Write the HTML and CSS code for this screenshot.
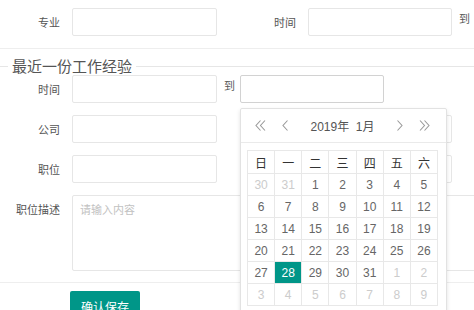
FILE: index.html
```html
<!DOCTYPE html>
<html lang="zh-CN">
<head>
<meta charset="utf-8">
<title>工作经验</title>
<link rel="stylesheet" href="styles.css">
</head>
<body>
<div class="page">
  <div class="row">
    <div class="field">
      <label class="label">专业</label>
      <div class="input"></div>
    </div>
    <div class="field field-2">
      <label class="label">时间</label>
      <div class="input input-sm"></div>
      <span class="to to-gap">到</span>
    </div>
  </div>
  <div class="sep sep-top"></div>

  <section class="group">
    <h2 class="legend"><span class="legend-text">最近一份工作经验</span></h2>
    <div class="row">
      <div class="field">
        <label class="label">时间</label>
        <div class="input"></div>
        <span class="to">到</span>
        <div class="input input-sm input-active"></div>
      </div>
    </div>
    <div class="row">
      <div class="field">
        <label class="label">公司</label>
        <div class="input"></div>
      </div>
      <div class="field field-2">
        <label class="label"></label>
        <div class="input input-sm"></div>
      </div>
    </div>
    <div class="row">
      <div class="field">
        <label class="label">职位</label>
        <div class="input"></div>
      </div>
      <div class="field field-2">
        <label class="label"></label>
        <div class="input input-sm"></div>
      </div>
    </div>
    <div class="row row-tall">
      <div class="field">
        <label class="label">职位描述</label>
        <div class="textarea"><span class="placeholder">请输入内容</span></div>
      </div>
    </div>
  </section>
  <div class="sep sep-bottom"></div>
  <div class="actions">
    <button class="btn">确认保存</button>
  </div>

  <div class="laydate">
    <div class="ld-header">
      <span class="ld-icon ld-dbl">
        <svg width="11" height="11" viewBox="0 0 11 11"><path d="M5.5 0.5 L1 5.5 L5.5 10.5 M10 0.5 L5.5 5.5 L10 10.5" fill="none" stroke="#9a9a9a" stroke-width="1.1"/></svg>
      </span>
      <span class="ld-icon ld-sgl">
        <svg width="6" height="11" viewBox="0 0 6 11"><path d="M5.5 0.5 L1 5.5 L5.5 10.5" fill="none" stroke="#9a9a9a" stroke-width="1.1"/></svg>
      </span>
      <span class="ld-title">2019年&nbsp;&nbsp;1月</span>
      <span class="ld-icon ld-sgl ld-sgl-r">
        <svg width="6" height="11" viewBox="0 0 6 11"><path d="M0.5 0.5 L5 5.5 L0.5 10.5" fill="none" stroke="#9a9a9a" stroke-width="1.1"/></svg>
      </span>
      <span class="ld-icon ld-dbl">
        <svg width="11" height="11" viewBox="0 0 11 11"><path d="M1 0.5 L5.5 5.5 L1 10.5 M5.5 0.5 L10 5.5 L5.5 10.5" fill="none" stroke="#9a9a9a" stroke-width="1.1"/></svg>
      </span>
    </div>
    <div class="ld-content">
      <table class="ld-table">
        <thead>
          <tr><th>日</th><th>一</th><th>二</th><th>三</th><th>四</th><th>五</th><th>六</th></tr>
        </thead>
        <tbody>
          <tr><td class="other">30</td><td class="other">31</td><td>1</td><td>2</td><td>3</td><td>4</td><td>5</td></tr>
          <tr><td>6</td><td>7</td><td>8</td><td>9</td><td>10</td><td>11</td><td>12</td></tr>
          <tr><td>13</td><td>14</td><td>15</td><td>16</td><td>17</td><td>18</td><td>19</td></tr>
          <tr><td>20</td><td>21</td><td>22</td><td>23</td><td>24</td><td>25</td><td>26</td></tr>
          <tr><td>27</td><td class="selected">28</td><td>29</td><td>30</td><td>31</td><td class="other">1</td><td class="other">2</td></tr>
          <tr><td class="other">3</td><td class="other">4</td><td class="other">5</td><td class="other">6</td><td class="other">7</td><td class="other">8</td><td class="other">9</td></tr>
        </tbody>
      </table>
    </div>
  </div>
</div>
</body>
</html>
```

FILE: styles.css
```css
html, body {
  margin: 0;
  padding: 0;
  overflow: hidden;
  background: #fff;
}
body {
  font-family: "Liberation Sans", "Noto Sans CJK SC", sans-serif;
  font-size: 12px;
  color: #555;
}
.page {
  position: relative;
  width: 474px;
  height: 310px;
  padding-top: 8px;
  box-sizing: border-box;
}
.row {
  display: flex;
  height: 28px;
  margin-bottom: 12px;
}
.field {
  display: flex;
  align-items: flex-start;
}
.field-2 {
  margin-left: 19px;
}
.label {
  width: 60px;
  flex: none;
  text-align: right;
  line-height: 28px;
  font-family: "Noto Sans CJK SC", sans-serif;
  font-size: 11px;
  color: #555;
}
.input {
  width: 145px;
  height: 28px;
  box-sizing: border-box;
  margin-left: 12px;
  border: 1px solid #e6e6e6;
  border-radius: 2px;
  background: #fff;
  flex: none;
}
.input-sm {
  width: 144px;
}
.to + .input {
  margin-left: 0;
}
.to {
  width: 23px;
  box-sizing: border-box;
  line-height: 20px;
  padding-left: 7px;
  font-family: "Noto Sans CJK SC", sans-serif;
  font-size: 11px;
  color: #555;
}
.to-gap {
  padding-left: 7px;
}
.input-active {
  border-color: #d2d2d2;
}
.sep {
  height: 1px;
  background: #eee;
}
.sep-top {
  margin-bottom: 8px;
}
.group {
  margin: 0;
  padding: 0;
}
.legend {
  display: flex;
  align-items: center;
  height: 18px;
  margin: 0;
  font-weight: normal;
}
.legend::before,
.legend::after {
  content: "";
  height: 1px;
  background: #e6e6e6;
}
.legend::before {
  width: 8px;
  flex: none;
}
.legend::after {
  flex: 1;
}
.legend-text {
  padding: 0 4px;
  font-family: "Noto Sans CJK SC", sans-serif;
  font-size: 15px;
  line-height: 18px;
  color: #555;
}
.row-tall {
  height: 76px;
  margin-bottom: 0;
}
.textarea {
  width: 420px;
  height: 76px;
  box-sizing: border-box;
  margin-left: 12px;
  border: 1px solid #e6e6e6;
  border-radius: 2px;
  padding: 3px 7px;
  line-height: 20px;
  flex: none;
}
.placeholder {
  color: #c2c2c2;
  font-family: "Noto Sans CJK SC", sans-serif;
  font-size: 11px;
}
.sep-bottom {
  margin-top: 11px;
}
.actions {
  padding: 8px 0 0 70px;
}
.btn {
  width: 70px;
  height: 30px;
  border: 0;
  border-radius: 2px;
  background: #009688;
  color: #fff;
  font-family: "Noto Sans CJK SC", sans-serif;
  font-size: 12px;
  padding: 0;
}

/* date picker overlay */
.laydate {
  position: absolute;
  left: 240px;
  top: 108px;
  width: 207px;
  height: 240px;
  box-sizing: border-box;
  border: 1px solid #e2e2e2;
  border-radius: 2px;
  background: #fff;
  box-shadow: 0 2px 4px rgba(0, 0, 0, 0.12);
}
.ld-header {
  display: flex;
  align-items: center;
  height: 33px;
  padding: 0 16px 0 14px;
  border-bottom: 1px solid #eaeaea;
}
.ld-icon {
  display: flex;
  align-items: center;
}
.ld-dbl + .ld-sgl {
  margin-left: 16px;
}
.ld-sgl-r {
  margin-right: 16px;
}
.ld-title {
  flex: 1;
  text-align: center;
  color: #555;
  font-family: "Liberation Sans", "Noto Sans CJK SC", sans-serif;
  font-size: 12px;
}
.ld-content {
  padding: 7px 8px 0 6px;
}
.ld-table {
  width: 191px;
  border-collapse: collapse;
  table-layout: fixed;
}
.ld-table th,
.ld-table td {
  border: 1px solid #e8e8e8;
  text-align: center;
  padding: 0;
  height: 21px;
  font-weight: normal;
}
.ld-table th {
  height: 22px;
  color: #333;
  font-family: "Noto Sans CJK SC", sans-serif;
  font-size: 12px;
}
.ld-table td {
  color: #666;
  font-size: 12px;
}
.ld-table td.other {
  color: #ccc;
}
.ld-table td.selected {
  background: #009688;
  color: #fff;
}
```
